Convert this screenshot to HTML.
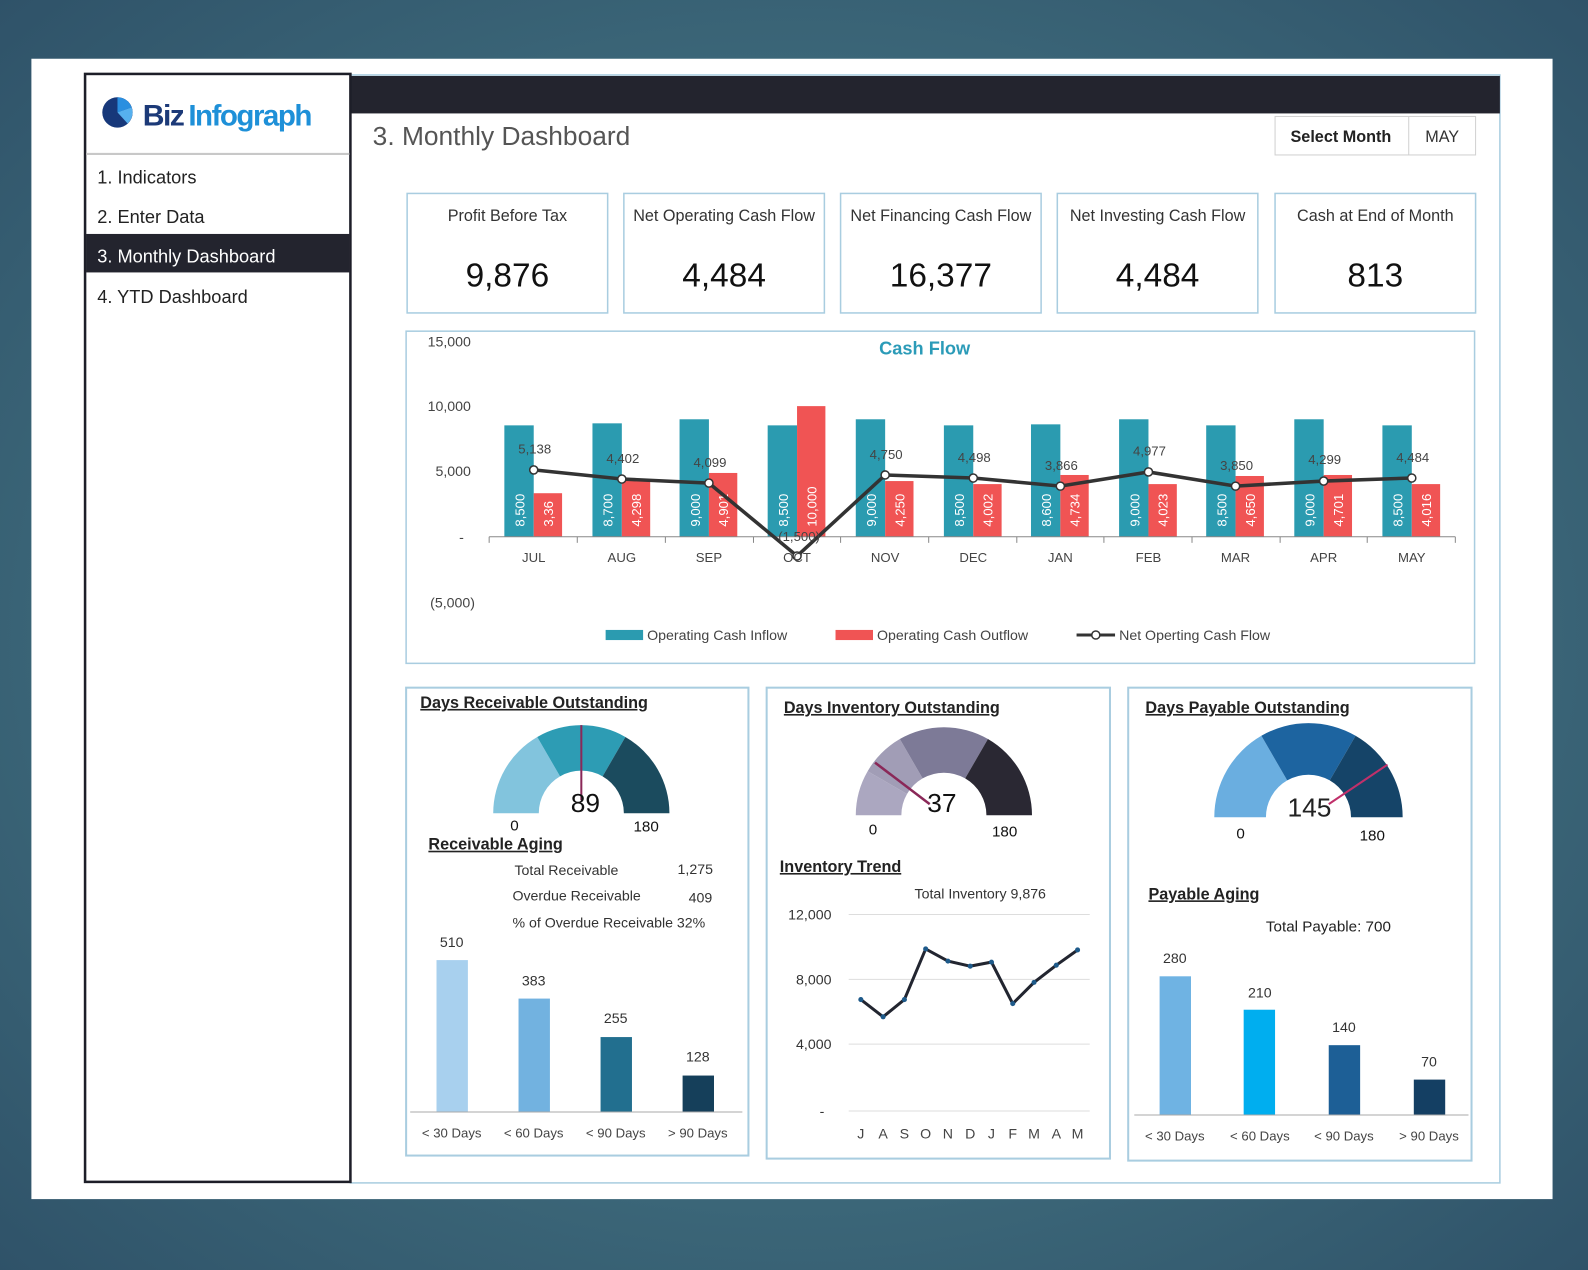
<!DOCTYPE html>
<html><head><meta charset="utf-8"><style>
html,body{margin:0;padding:0;width:1588px;height:1270px;overflow:hidden;background:#3f6c80}
svg{display:block}
text{font-family:"Liberation Sans",sans-serif}
</style></head><body>
<svg width="1588" height="1270" viewBox="0 0 1568 1254" preserveAspectRatio="none" xmlns="http://www.w3.org/2000/svg">
<defs>
<radialGradient id="bg" cx="50%" cy="50%" r="75%">
<stop offset="0" stop-color="#4d7c8c"/><stop offset="0.6" stop-color="#3b6678"/><stop offset="1" stop-color="#2d4f66"/>
</radialGradient>
</defs>
<rect width="1568" height="1254" fill="url(#bg)"/>
<rect x="31" y="58" width="1502" height="1126" fill="#fff"/>
<rect x="346" y="74" width="1135" height="1094" fill="#fff" stroke="#a9cde0" stroke-width="1.5"/>
<rect x="346" y="75" width="1135" height="37" fill="#23242e"/>
<rect x="84" y="73" width="262" height="1094" fill="#fff" stroke="#1d1e28" stroke-width="2.5"/>
<line x1="85" y1="152" x2="345" y2="152" stroke="#c8c8c8" stroke-width="2"/>
<circle cx="116" cy="111" r="15" fill="#17387a"/>
<path d="M116 111 L116 96 A15 15 0 0 1 130 106 Z" fill="#2a8fe0"/>
<path d="M116 111 L130 106 A15 15 0 0 1 126 122 Z" fill="#56b0ee"/>
<text x="141" y="124" font-size="29" fill="#1c3a78" font-weight="bold" letter-spacing="-1.5" textLength="40" lengthAdjust="spacingAndGlyphs">Biz</text>
<text x="186" y="124" font-size="29" fill="#1e90d8" font-weight="bold" letter-spacing="-1.5" textLength="121" lengthAdjust="spacingAndGlyphs">Infograph</text>
<text x="96" y="181" font-size="18" fill="#222">1. Indicators</text>
<text x="96" y="220" font-size="18" fill="#222">2. Enter Data</text>
<rect x="85" y="231" width="260" height="38" fill="#23242e"/>
<text x="96" y="259" font-size="18" fill="#fff">3. Monthly Dashboard</text>
<text x="96" y="299" font-size="18" fill="#222">4. YTD Dashboard</text>
<text x="368" y="143" font-size="26" fill="#555">3. Monthly Dashboard</text>
<rect x="1259" y="115" width="198" height="38" fill="#fff" stroke="#d0d0d0"/>
<line x1="1391" y1="115" x2="1391" y2="153" stroke="#d0d0d0"/>
<text x="1324" y="140" font-size="16" font-weight="bold" fill="#222" text-anchor="middle">Select Month</text>
<text x="1424" y="140" font-size="16" fill="#333" text-anchor="middle">MAY</text>
<g stroke="#a9cde0" stroke-width="1.5" fill="#fff">
<rect x="402" y="191" width="198" height="118"/><rect x="616" y="191" width="198" height="118"/><rect x="830" y="191" width="198" height="118"/><rect x="1044" y="191" width="198" height="118"/><rect x="1259" y="191" width="198" height="118"/>
</g>
<g font-size="16" fill="#333" text-anchor="middle">
<text x="501" y="218">Profit Before Tax</text><text x="715" y="218">Net Operating Cash Flow</text><text x="929" y="218">Net Financing Cash Flow</text><text x="1143" y="218">Net Investing Cash Flow</text><text x="1358" y="218">Cash at End of Month</text>
</g>
<g font-size="33" fill="#111" text-anchor="middle">
<text x="501" y="283">9,876</text><text x="715" y="283">4,484</text><text x="929" y="283">16,377</text><text x="1143" y="283">4,484</text><text x="1358" y="283">813</text>
</g>
<rect x="401" y="327" width="1055" height="328" fill="#fff" stroke="#a9cde0" stroke-width="1.5"/>
<text x="913" y="350" font-size="18" font-weight="bold" fill="#2b9bb8" text-anchor="middle">Cash Flow</text>
<g font-size="14" fill="#444" text-anchor="end">
<text x="465" y="342">15,000</text><text x="465" y="406">10,000</text><text x="465" y="470">5,000</text><text x="458" y="535">-</text><text x="469" y="600">(5,000)</text>
</g>
<g fill="#2b9bb0">
<rect x="498" y="420" width="29" height="110"/><rect x="585" y="418" width="29" height="112"/><rect x="671" y="414" width="29" height="116"/><rect x="758" y="420" width="29" height="110"/><rect x="845" y="414" width="29" height="116"/><rect x="932" y="420" width="29" height="110"/><rect x="1018" y="419" width="29" height="111"/><rect x="1105" y="414" width="29" height="116"/><rect x="1191" y="420" width="29" height="110"/><rect x="1278" y="414" width="29" height="116"/><rect x="1365" y="420" width="29" height="110"/>
</g>
<g fill="#f05454">
<rect x="527" y="487" width="28" height="43"/><rect x="614" y="474" width="28" height="56"/><rect x="700" y="467" width="28" height="63"/><rect x="787" y="401" width="28" height="129"/><rect x="874" y="475" width="28" height="55"/><rect x="961" y="478" width="28" height="52"/><rect x="1047" y="469" width="28" height="61"/><rect x="1134" y="478" width="28" height="52"/><rect x="1220" y="470" width="28" height="60"/><rect x="1307" y="469" width="28" height="61"/><rect x="1394" y="478" width="28" height="52"/>
</g>
<g font-size="13" fill="#fff">
<text transform="translate(518,520) rotate(-90)">8,500</text><text transform="translate(546,520) rotate(-90)">3,36</text>
<text transform="translate(605,520) rotate(-90)">8,700</text><text transform="translate(633,520) rotate(-90)">4,298</text>
<text transform="translate(691,520) rotate(-90)">9,000</text><text transform="translate(719,520) rotate(-90)">4,901</text>
<text transform="translate(778,520) rotate(-90)">8,500</text><text transform="translate(806,520) rotate(-90)">10,000</text>
<text transform="translate(865,520) rotate(-90)">9,000</text><text transform="translate(893,520) rotate(-90)">4,250</text>
<text transform="translate(952,520) rotate(-90)">8,500</text><text transform="translate(980,520) rotate(-90)">4,002</text>
<text transform="translate(1038,520) rotate(-90)">8,600</text><text transform="translate(1066,520) rotate(-90)">4,734</text>
<text transform="translate(1125,520) rotate(-90)">9,000</text><text transform="translate(1153,520) rotate(-90)">4,023</text>
<text transform="translate(1211,520) rotate(-90)">8,500</text><text transform="translate(1239,520) rotate(-90)">4,650</text>
<text transform="translate(1298,520) rotate(-90)">9,000</text><text transform="translate(1326,520) rotate(-90)">4,701</text>
<text transform="translate(1385,520) rotate(-90)">8,500</text><text transform="translate(1413,520) rotate(-90)">4,016</text>
</g>
<line x1="483" y1="530" x2="1437" y2="530" stroke="#888"/>
<g stroke="#888"><line x1="483" y1="530" x2="483" y2="536"/><line x1="570" y1="530" x2="570" y2="536"/><line x1="657" y1="530" x2="657" y2="536"/><line x1="744" y1="530" x2="744" y2="536"/><line x1="830" y1="530" x2="830" y2="536"/><line x1="917" y1="530" x2="917" y2="536"/><line x1="1004" y1="530" x2="1004" y2="536"/><line x1="1090" y1="530" x2="1090" y2="536"/><line x1="1177" y1="530" x2="1177" y2="536"/><line x1="1264" y1="530" x2="1264" y2="536"/><line x1="1350" y1="530" x2="1350" y2="536"/><line x1="1437" y1="530" x2="1437" y2="536"/></g>
<polyline points="527,464 614,473 700,477 787,549 874,469 961,472 1047,480 1134,466 1220,480 1307,475 1394,472" fill="none" stroke="#333" stroke-width="3.5"/>
<g fill="#fff" stroke="#333" stroke-width="1.5">
<circle cx="527" cy="464" r="4"/><circle cx="614" cy="473" r="4"/><circle cx="700" cy="477" r="4"/><circle cx="787" cy="549" r="4"/><circle cx="874" cy="469" r="4"/><circle cx="961" cy="472" r="4"/><circle cx="1047" cy="480" r="4"/><circle cx="1134" cy="466" r="4"/><circle cx="1220" cy="480" r="4"/><circle cx="1307" cy="475" r="4"/><circle cx="1394" cy="472" r="4"/>
</g>
<g font-size="13" fill="#444" text-anchor="middle">
<text x="528" y="448">5,138</text><text x="615" y="457">4,402</text><text x="701" y="461">4,099</text><text x="789" y="534">(1,500)</text><text x="875" y="453">4,750</text><text x="962" y="456">4,498</text><text x="1048" y="464">3,866</text><text x="1135" y="450">4,977</text><text x="1221" y="464">3,850</text><text x="1308" y="458">4,299</text><text x="1395" y="456">4,484</text>
</g>
<g font-size="13" fill="#444" text-anchor="middle">
<text x="527" y="555">JUL</text><text x="614" y="555">AUG</text><text x="700" y="555">SEP</text><text x="787" y="555">OCT</text><text x="874" y="555">NOV</text><text x="961" y="555">DEC</text><text x="1047" y="555">JAN</text><text x="1134" y="555">FEB</text><text x="1220" y="555">MAR</text><text x="1307" y="555">APR</text><text x="1394" y="555">MAY</text>
</g>
<rect x="598" y="622" width="37" height="10" fill="#2b9bb0"/><text x="639" y="632" font-size="14" fill="#444">Operating Cash Inflow</text>
<rect x="825" y="622" width="37" height="10" fill="#f05454"/><text x="866" y="632" font-size="14" fill="#444">Operating Cash Outflow</text>
<line x1="1063" y1="627" x2="1101" y2="627" stroke="#333" stroke-width="3"/><circle cx="1082" cy="627" r="4" fill="#fff" stroke="#333" stroke-width="1.5"/><text x="1105" y="632" font-size="14" fill="#444">Net Operting Cash Flow</text>
<g fill="#fff" stroke="#a9cde0" stroke-width="2">
<rect x="401" y="679" width="338" height="462"/><rect x="757" y="679" width="339" height="465"/><rect x="1114" y="679" width="339" height="467"/>
</g>
<g font-size="16" font-weight="bold" fill="#222" text-decoration="underline">
<text x="415" y="699">Days Receivable Outstanding</text>
<text x="774" y="704">Days Inventory Outstanding</text>
<text x="1131" y="704">Days Payable Outstanding</text>
<text x="423" y="839">Receivable Aging</text>
<text x="770" y="861">Inventory Trend</text>
<text x="1134" y="888">Payable Aging</text>
</g>
<path d="M487 803 A87 87 0 0 1 530.5 727.7 L553 766.6 A42 42 0 0 0 532 803 Z" fill="#82c4dd"/>
<path d="M530.5 727.7 A87 87 0 0 1 617.5 727.7 L595 766.6 A42 42 0 0 0 553 766.6 Z" fill="#2d9cb4"/>
<path d="M617.5 727.7 A87 87 0 0 1 661 803 L616 803 A42 42 0 0 0 595 766.6 Z" fill="#1b4b5e"/>
<line x1="574" y1="716" x2="574" y2="790" stroke="#8a2858" stroke-width="2"/>
<text x="578" y="802" font-size="26" fill="#111" text-anchor="middle">89</text>
<text x="508" y="820" font-size="15" fill="#111" text-anchor="middle">0</text><text x="638" y="821" font-size="15" fill="#111" text-anchor="middle">180</text>
<path d="M845 805 A87 87 0 0 1 856.7 761.5 L895.6 784 A42 42 0 0 0 890 805 Z" fill="#aba7c0"/>
<path d="M856.7 761.5 A87 87 0 0 1 888.5 729.7 L911 768.6 A42 42 0 0 0 895.6 784 Z" fill="#a19db6"/>
<path d="M888.5 729.7 A87 87 0 0 1 975.5 729.7 L953 768.6 A42 42 0 0 0 911 768.6 Z" fill="#7d7a97"/>
<path d="M975.5 729.7 A87 87 0 0 1 1019 805 L974 805 A42 42 0 0 0 953 768.6 Z" fill="#2a2833"/>
<line x1="864" y1="753" x2="918" y2="794" stroke="#8a2858" stroke-width="2.5"/>
<text x="930" y="802" font-size="26" fill="#111" text-anchor="middle">37</text>
<text x="862" y="824" font-size="15" fill="#111" text-anchor="middle">0</text><text x="992" y="826" font-size="15" fill="#111" text-anchor="middle">180</text>
<path d="M1199 807 A93 93 0 0 1 1245.5 726.5 L1271 770.6 A42 42 0 0 0 1250 807 Z" fill="#6aaee0"/>
<path d="M1245.5 726.5 A93 93 0 0 1 1338.5 726.5 L1313 770.6 A42 42 0 0 0 1271 770.6 Z" fill="#1d64a0"/>
<path d="M1338.5 726.5 A93 93 0 0 1 1385 807 L1334 807 A42 42 0 0 0 1313 770.6 Z" fill="#154468"/>
<line x1="1370" y1="755" x2="1312" y2="794" stroke="#c0306a" stroke-width="2"/>
<text x="1293" y="806" font-size="26" fill="#222" text-anchor="middle">145</text>
<text x="1225" y="828" font-size="15" fill="#111" text-anchor="middle">0</text><text x="1355" y="830" font-size="15" fill="#111" text-anchor="middle">180</text>
<g font-size="14" fill="#333">
<text x="508" y="864">Total Receivable</text><text x="669" y="863">1,275</text>
<text x="506" y="889">Overdue Receivable</text><text x="680" y="891">409</text>
<text x="506" y="916">% of Overdue Receivable 32%</text>
</g>
<rect x="431" y="948" width="31" height="150" fill="#a8d0ee"/><rect x="512" y="986" width="31" height="112" fill="#72b2e0"/><rect x="593" y="1024" width="31" height="74" fill="#226f8f"/><rect x="674" y="1062" width="31" height="36" fill="#153f5a"/>
<line x1="405" y1="1098" x2="733" y2="1098" stroke="#aaa"/>
<g font-size="14" fill="#333" text-anchor="middle"><text x="446" y="935">510</text><text x="527" y="973">383</text><text x="608" y="1010">255</text><text x="689" y="1048">128</text></g>
<g font-size="13" fill="#444" text-anchor="middle"><text x="446" y="1123">&lt; 30 Days</text><text x="527" y="1123">&lt; 60 Days</text><text x="608" y="1123">&lt; 90 Days</text><text x="689" y="1123">&gt; 90 Days</text></g>
<text x="903" y="887" font-size="14" fill="#333">Total Inventory  9,876</text>
<g stroke="#ddd"><line x1="838" y1="903" x2="1076" y2="903"/><line x1="838" y1="967" x2="1076" y2="967"/><line x1="838" y1="1031" x2="1076" y2="1031"/><line x1="838" y1="1097" x2="1076" y2="1097"/></g>
<g font-size="14" fill="#333" text-anchor="end"><text x="821" y="908">12,000</text><text x="821" y="972">8,000</text><text x="821" y="1036">4,000</text><text x="814" y="1102">-</text></g>
<polyline points="850,987 872,1004 893,987 914,937 936,949 958,954 979,950 1000,991 1021,970 1043,953 1064,938" fill="none" stroke="#222530" stroke-width="3"/>
<g fill="#1e5a8a"><circle cx="850" cy="987" r="2.5"/><circle cx="872" cy="1004" r="2.5"/><circle cx="893" cy="987" r="2.5"/><circle cx="914" cy="937" r="2.5"/><circle cx="936" cy="949" r="2.5"/><circle cx="958" cy="954" r="2.5"/><circle cx="979" cy="950" r="2.5"/><circle cx="1000" cy="991" r="2.5"/><circle cx="1021" cy="970" r="2.5"/><circle cx="1043" cy="953" r="2.5"/><circle cx="1064" cy="938" r="2.5"/></g>
<g font-size="14" fill="#444" text-anchor="middle"><text x="850" y="1124">J</text><text x="872" y="1124">A</text><text x="893" y="1124">S</text><text x="914" y="1124">O</text><text x="936" y="1124">N</text><text x="958" y="1124">D</text><text x="979" y="1124">J</text><text x="1000" y="1124">F</text><text x="1021" y="1124">M</text><text x="1043" y="1124">A</text><text x="1064" y="1124">M</text></g>
<text x="1250" y="920" font-size="15" fill="#222">Total Payable: 700</text>
<rect x="1145" y="964" width="31" height="137" fill="#6fb3e3"/><rect x="1228" y="997" width="31" height="104" fill="#00aeef"/><rect x="1312" y="1032" width="31" height="69" fill="#1d5f96"/><rect x="1396" y="1066" width="31" height="35" fill="#143f63"/>
<line x1="1120" y1="1101" x2="1450" y2="1101" stroke="#aaa"/>
<g font-size="14" fill="#333" text-anchor="middle"><text x="1160" y="951">280</text><text x="1244" y="985">210</text><text x="1327" y="1019">140</text><text x="1411" y="1053">70</text></g>
<g font-size="13" fill="#444" text-anchor="middle"><text x="1160" y="1126">&lt; 30 Days</text><text x="1244" y="1126">&lt; 60 Days</text><text x="1327" y="1126">&lt; 90 Days</text><text x="1411" y="1126">&gt; 90 Days</text></g>
</svg>
</body></html>
